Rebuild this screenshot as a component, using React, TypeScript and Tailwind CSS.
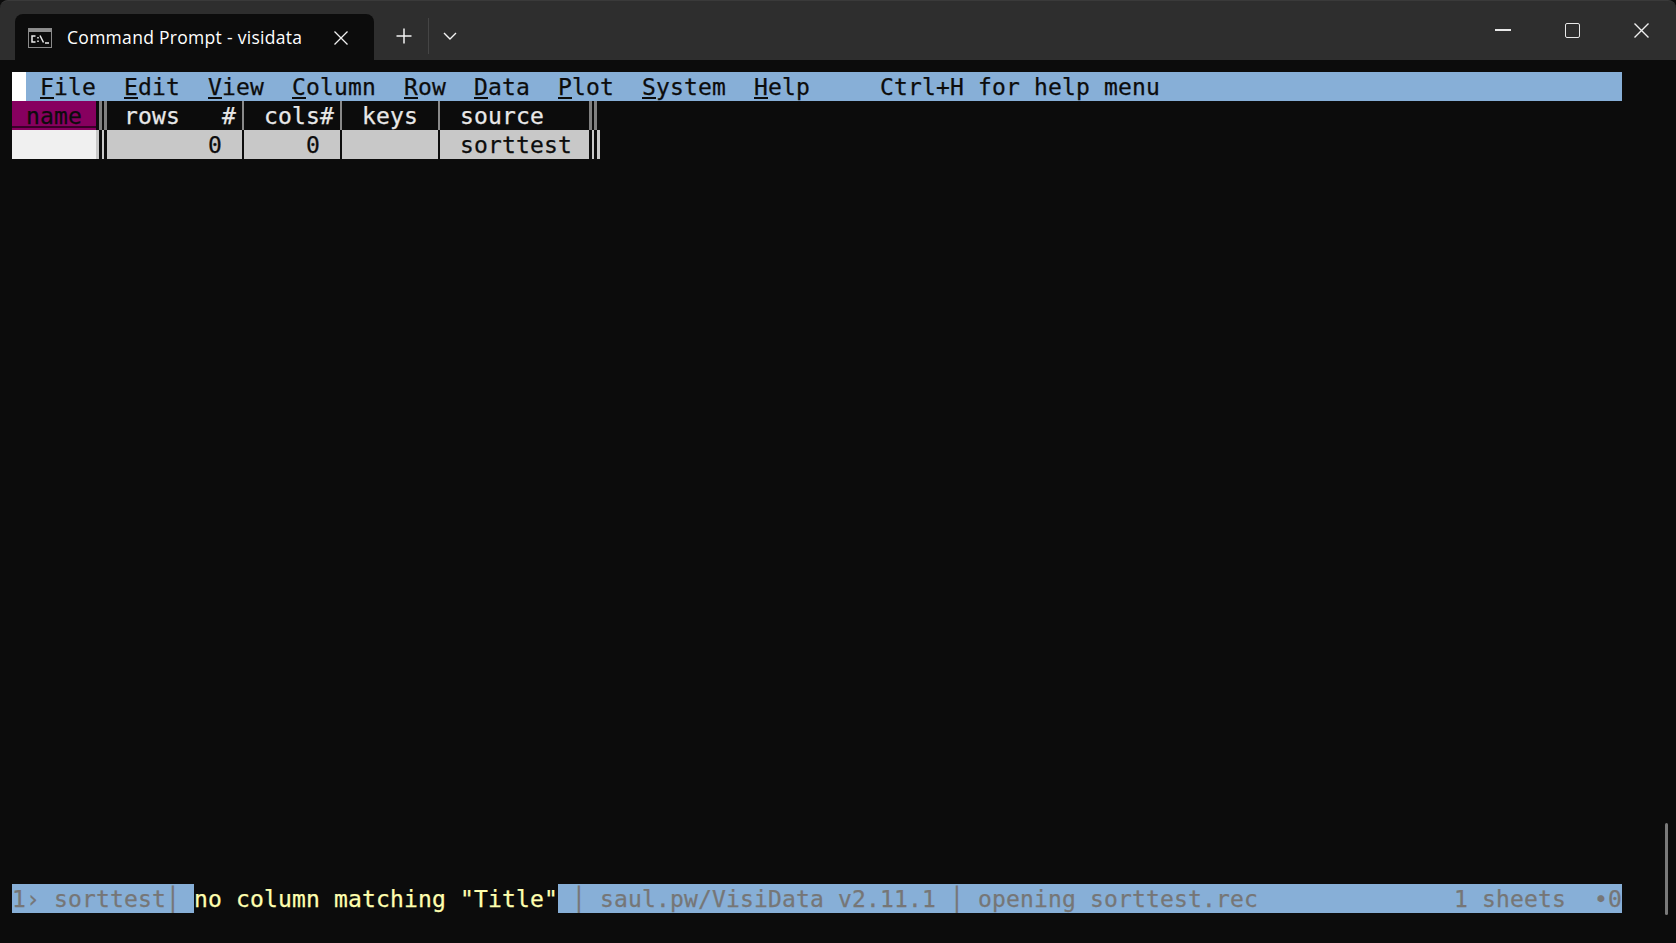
const mono = "font-['DejaVu_Sans_Mono',monospace] text-[23px] tracking-[0.15px] leading-[31px] whitespace-pre [-webkit-text-stroke:0.25px]";

const menuItems = [
  { key: "F", rest: "ile", cols: 6 },
  { key: "E", rest: "dit", cols: 6 },
  { key: "V", rest: "iew", cols: 6 },
  { key: "C", rest: "olumn", cols: 8 },
  { key: "R", rest: "ow", cols: 5 },
  { key: "D", rest: "ata", cols: 6 },
  { key: "P", rest: "lot", cols: 6 },
  { key: "S", rest: "ystem", cols: 8 },
  { key: "H", rest: "elp", cols: 9 },
];

const Cell = ({ w, className = "", children }: any) => (
  <div className={`h-[29px] shrink-0 ${className}`} style={{ width: w * 14 }}>
    {children}
  </div>
);

// single column separator, one cell wide
const Sep = ({ color, bg = "" }: { color: string; bg?: string }) => (
  <div className={`h-[29px] w-[14px] shrink-0 flex justify-center ${bg}`}>
    <div className={`h-full w-[2px] ${color}`} />
  </div>
);

// double separator at the key column and at the end of the row
const DoubleSep = ({ bar, bg }: { bar: string; bg: string }) => (
  <div className={`h-[29px] w-[14px] shrink-0 flex pl-[3px] gap-[2px] ${bg}`}>
    <div className={`h-full w-[3px] ${bar}`} />
    <div className={`h-full w-[3px] ${bar}`} />
  </div>
);

const TitleBar = () => (
  <div className="h-[60px] shrink-0 bg-[#2e2e2e] flex items-end pl-[15px] rounded-t-[8px] border-t border-[#3a3a3a]">
    <div className="w-[359px] h-[46px] bg-[#0c0c0c] rounded-t-[8px] flex items-center pl-[13px] pt-[1px]">
      <svg width="24" height="20" viewBox="0 0 24 20" className="shrink-0">
        <rect x="0.5" y="0.5" width="23" height="19" fill="#0c0c0c" stroke="#8a8a8a" />
        <rect x="1" y="1" width="22" height="3" fill="#8f8f8f" />
        <path d="M7.5 8H4v6h3.5M10 9v1.5M10 12.5V14M12 7.5l3.5 7M17 15h4" stroke="#ececec" strokeWidth="1.5" fill="none" />
      </svg>
      <span className="ml-[15px] font-['Open_Sans',sans-serif] text-[17.5px] tracking-[0.29px] font-medium text-white whitespace-nowrap">
        Command Prompt - visidata
      </span>
      <svg width="14" height="14" viewBox="0 0 14 14" className="ml-[32px] shrink-0">
        <path d="M0.5 0.5l13 13M13.5 0.5l-13 13" stroke="#f0f0f0" strokeWidth="1.3" />
      </svg>
    </div>
    <div className="h-[46px] flex items-center pb-[2px]">
      <svg width="16" height="16" viewBox="0 0 16 16" className="ml-[22px]">
        <path d="M8 0.5v15M0.5 8h15" stroke="#f4f4f4" strokeWidth="1.5" />
      </svg>
      <div className="ml-[16px] w-[1px] h-[36px] bg-[#454545]" />
      <svg width="14" height="8" viewBox="0 0 14 8" className="ml-[14px]">
        <path d="M1 1l6 6 6-6" stroke="#f4f4f4" strokeWidth="1.4" fill="none" />
      </svg>
    </div>
    <div className="ml-auto h-[60px] flex items-center pr-[27px] gap-[54px]">
      <svg width="16" height="2" viewBox="0 0 16 2">
        <rect width="16" height="2" fill="#e8e8e8" />
      </svg>
      <div className="w-[15px] h-[15px] border-[1.5px] border-[#e8e8e8] rounded-[2px]" />
      <svg width="15" height="15" viewBox="0 0 15 15">
        <path d="M0.5 0.5l14 14M14.5 0.5l-14 14" stroke="#f0f0f0" strokeWidth="1.4" />
      </svg>
    </div>
  </div>
);

const MenuBar = () => (
  <div className="flex h-[29px] bg-[#87afd7] text-[#0c0c0c]">
    <Cell w={1} className="bg-white" />
    <Cell w={1} />
    {menuItems.map((m) => (
      <Cell key={m.key} w={m.cols}>
        <u className="underline underline-offset-[2px] decoration-2">{m.key}</u>
        {m.rest}
      </Cell>
    ))}
    <Cell w={25}>Ctrl+H for help menu</Cell>
    <div className="flex-1" />
  </div>
);

const HeaderRow = () => (
  <div className="flex h-[29px] text-[#e8e8e8]">
    <Cell w={6} className="bg-[#87005f] text-[#0c0c0c] pl-[14px]">
      <div className="h-[25px]">name</div>
      <div className="h-[2px] bg-[#3a0028] -ml-[14px]" />
    </Cell>
    <DoubleSep bar="bg-[#808080]" bg="bg-[#0c0c0c]" />
    <Cell w={9} className="pl-[14px]">{"rows   #"}</Cell>
    <Sep color="bg-[#8a8a8a]" />
    <Cell w={6} className="pl-[14px]">{"cols#"}</Cell>
    <Sep color="bg-[#8a8a8a]" />
    <Cell w={6} className="pl-[14px]">keys</Cell>
    <Sep color="bg-[#8a8a8a]" />
    <Cell w={10} className="pl-[14px]">source</Cell>
    <DoubleSep bar="bg-[#808080]" bg="bg-[#0c0c0c]" />
  </div>
);

const DataRow = () => (
  <div className="flex h-[29px] text-[#0c0c0c]">
    <Cell w={6} className="bg-[#f0f0f0]" />
    <DoubleSep bar="bg-[#0c0c0c]" bg="bg-[#c8c8c8]" />
    <Cell w={9} className="bg-[#c8c8c8] text-right pr-[14px]">0</Cell>
    <Sep color="bg-[#0c0c0c]" bg="bg-[#c8c8c8]" />
    <Cell w={6} className="bg-[#c8c8c8] text-right pr-[14px]">0</Cell>
    <Sep color="bg-[#0c0c0c]" bg="bg-[#c8c8c8]" />
    <Cell w={6} className="bg-[#c8c8c8]" />
    <Sep color="bg-[#0c0c0c]" bg="bg-[#c8c8c8]" />
    <Cell w={10} className="bg-[#c8c8c8] pl-[14px]">sorttest</Cell>
    <DoubleSep bar="bg-[#0c0c0c]" bg="bg-[#c8c8c8]" />
  </div>
);

const StatusBar = () => (
  <div className="flex h-[29px] text-[#767676]">
    <Cell w={13} className="bg-[#87afd7]">{"1› sorttest│"}</Cell>
    <Cell w={26} className="text-[#ffffaf]">{'no column matching "Title"'}</Cell>
    <div className="flex-1 bg-[#87afd7] flex">
      <Cell w={3}>{" │"}</Cell>
      <Cell w={25}>{"saul.pw/VisiData v2.11.1"}</Cell>
      <Cell w={2}>{"│"}</Cell>
      <Cell w={20}>{"opening sorttest.rec"}</Cell>
      <div className="flex-1 text-right">{"1 sheets  •0"}</div>
    </div>
  </div>
);

export default function App() {
  return (
    <div className="w-[1676px] h-[943px] bg-[#0c0c0c] flex flex-col overflow-hidden">
      <TitleBar />
      <div className={`relative flex-1 flex flex-col pt-[12px] pl-[12px] pr-[54px] pb-[30px] ${mono}`}>
        <MenuBar />
        <HeaderRow />
        <DataRow />
        <div className="flex-1" />
        <StatusBar />
        <div className="absolute right-[8px] top-[763px] w-[3px] h-[92px] rounded-full bg-[#7a7a7a]" />
      </div>
    </div>
  );
}
